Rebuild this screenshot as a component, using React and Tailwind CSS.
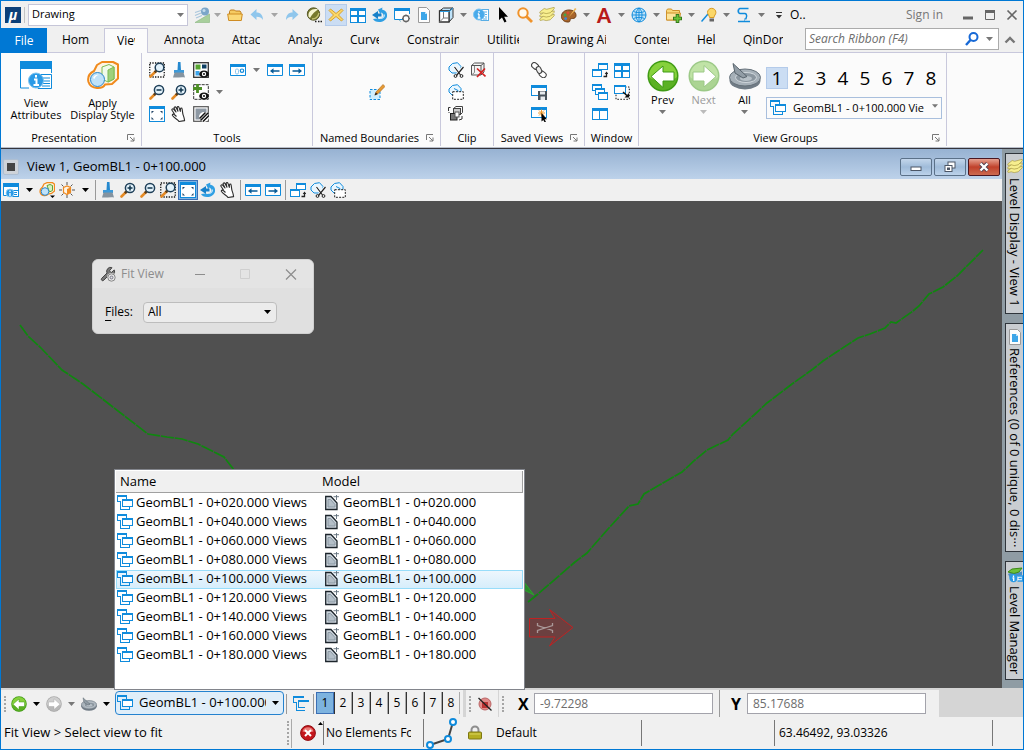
import React from "react";
import { Wrench } from "lucide-react";

const B = "#0f8bdc";

function Ico({ s = 16, vb = 16, crisp = false, children }) {
  return (
    <svg
      width={s}
      height={s}
      viewBox={`0 0 ${vb} ${vb}`}
      fill="none"
      className="shrink-0"
      aria-hidden="true"
      shapeRendering={crisp ? "crispEdges" : "auto"}
    >
      {children}
    </svg>
  );
}

function Win({ x, y, w, h, fill = "#fff" }) {
  return (
    <g>
      <rect x={x + 0.5} y={y + 0.5} width={w - 1} height={h - 1} fill={fill} stroke={B} />
      <rect x={x} y={y} width={w} height={Math.max(2, Math.round(h / 4))} fill={B} />
    </g>
  );
}

function Caret({ c = "#777", w = 7 }) {
  return (
    <svg width={w} height="4" viewBox="0 0 7 4" className="shrink-0" aria-hidden="true">
      <path d="M0 0h7L3.500 4z" fill={c} />
    </svg>
  );
}

function Glass({ cx = 10, cy = 6, r = 4.6, sign }) {
  return (
    <g>
      <path d={`M${cx - r + 1} ${cy + r - 1}L1.500 14.500`} stroke="#e58a25" strokeWidth="2.600" strokeLinecap="round" />
      <path d={`M${cx - r + 1} ${cy + r - 1}l-1.500 1.500`} stroke="#5a3b18" strokeWidth="2.600" />
      <circle cx={cx} cy={cy} r={r} fill="#e3f2fb" stroke="#1f3f58" strokeWidth="1.500" />
      {sign && <path d={`M${cx - 2.5} ${cy}h5`} stroke="#10344c" strokeWidth="1.500" />}
      {sign === "+" && <path d={`M${cx} ${cy - 2.5}v5`} stroke="#10344c" strokeWidth="1.500" />}
    </g>
  );
}

const hex = "M4.500 1.500L9.500.7 13 4.500v3L9 11H4L1 8V5z";

const I = {
  slope: (
    <Ico>
      <path d="M1 15.500L15.500 7v8.500z" fill="#a8cf9c" stroke="#8ab67f" strokeWidth=".6" />
      <path d="M1 5.500l6-2M1 8.500l6-2.500M2 11l6-2.500" stroke="#a9c6dc" strokeWidth="1.200" />
      <circle cx="11" cy="4.500" r="4" fill="#7ba6c9" />
      <circle cx="10" cy="3.500" r="1.500" fill="#c2dbee" />
    </Ico>
  ),
  folder: (
    <Ico>
      <path d="M2.500 13V4.500l1-1.500h4l1 1h4.500l1 1.500V13z" fill="#f5cb62" stroke="#bf7d1d" />
      <path d="M.7 7h14.600l-1 6.500H1.700z" fill="#fbd977" stroke="#cf8c23" />
    </Ico>
  ),
  undo: (
    <Ico>
      <path d="M1.500 7.500L7.500 2v3.500c4 0 6.500 2.500 6.500 7.500-1.500-2.500-3-3.300-6.500-3.300V13z" fill="#8fc6ec" />
    </Ico>
  ),
  redo: (
    <Ico>
      <path d="M14.500 7.500L8.500 2v3.500C4.500 5.500 2 8 2 13c1.500-2.500 3-3.300 6.500-3.300V13z" fill="#8fc6ec" />
    </Ico>
  ),
  sphere: (
    <Ico>
      <circle cx="7.500" cy="7" r="6.200" fill="#77792c" stroke="#595a2c" />
      <path d="M2.500 9.500C2 4 6.500 1 12 2.500 9.500 4 6 7 4 11z" fill="#f5f4d0" />
      <path d="M6 12c4 0 6-2 7-6" stroke="#c3c273" strokeWidth="1.300" />
      <path d="M9 14.500h1.500M12 14.500h1.500M14.500 14.500H16" stroke="#222" strokeWidth="1.400" />
    </Ico>
  ),
  cross: (
    <Ico>
      <path d="M2.500 2l5.500 4.500L13.500 2 15 3.500 10.500 8l4.500 4.500-1.500 1.500L8 9.500 2.500 14 1 12.500 5.500 8 1 3.500z" fill="#fbd768" stroke="#d9a22c" />
    </Ico>
  ),
  grid: (
    <Ico crisp>
      <rect x="0" y="1" width="16" height="15" fill={B} />
      <path d="M1 4h6v4H1zM9 4h6v4H9zM1 10h6v5H1zM9 10h6v5H9z" fill="#fff" />
    </Ico>
  ),
  rotate: (
    <Ico>
      <path d="M6 2.500l4.500-2-.5 2c4 1 5.500 3.500 5 7-.7 3.500-4 5.500-8 5.500C4 15 2 14 1 12l4-.5c3 1 6 .3 6.500-2.500.3-2-1-3-2.500-3.500l-.5 2z" fill="#2f9fe3" />
      <path d="M0 8l6-4v2.500h3.500V9.500H6V12z" fill="#1780c9" />
      <path d="M9 11.500c2-.5 3.500-2 3.500-4" stroke="#b9e2fa" strokeWidth="1.200" />
    </Ico>
  ),
  winGear: (
    <Ico>
      <path d="M9 12.500H.5V1.500h15V7" fill="#fff" stroke={B} />
      <path d="M0 1h16v3H0z" fill={B} />
      <circle cx="12" cy="11.500" r="3" fill="#fff" stroke="#666" strokeWidth="1.300" />
      <path d="M12 7.500v8M8 11.500h8" stroke="#666" strokeDasharray="1.200 5.600" />
      <path d="M5 13l2 1.500" stroke="#8bc" />
    </Ico>
  ),
  doc: (
    <Ico>
      <path d="M2.500.5h8l3 3v12h-11z" fill="#fdfdfd" stroke="#9a9a9a" />
      <path d="M5 5h4l2 2v6H5z" fill="#3da6e8" />
      <path d="M9 5l2 2H9z" fill="#bfe2f8" />
    </Ico>
  ),
  cube: (
    <Ico>
      <path d="M1.500 4l4-3H15l-4 3zM11 4l4-3v9.500L11 15z" fill="#bfe3fa" stroke="#333" strokeLinejoin="round" />
      <path d="M1.500 4H11v11H1.500z" fill="#fff" stroke="#333" strokeWidth="1.300" />
      <path d="M5.500 4v7M5.500 11H11M5.500 11l-4 4" stroke="#777" />
      <path d="M2 4.500h9L15 1" stroke="#2f9fe3" />
    </Ico>
  ),
  info: (
    <Ico>
      <rect x="8" y="2.500" width="7.500" height="11" fill="#fff" stroke="#5aaee5" />
      <path d="M11 5h3M12 7.500h2M12 10h2M10 12h4" stroke="#5aaee5" />
      <circle cx="6" cy="7.500" r="5.500" fill="#48aaea" stroke="#7cc4f1" />
      <path d="M6 4v1.500M6 7v4M4.800 7H6M4.700 11h2.700" stroke="#fff" strokeWidth="1.300" />
    </Ico>
  ),
  cursor: (
    <Ico>
      <path d="M4 0v13l3-2.500 2.500 5 2-1-2.300-4.800H13z" fill="#000" />
    </Ico>
  ),
  mag: (
    <Ico>
      <circle cx="6" cy="6" r="4.700" fill="#fffaf0" stroke="#f0932b" strokeWidth="2" />
      <path d="M9.500 9.500L15 15" stroke="#f0932b" strokeWidth="2.800" />
    </Ico>
  ),
  layers: (
    <Ico>
      {[12, 8.5, 5].map((y) => (
        <path key={y} d={`M.7 ${y}l4.500-3.500 2.500.8 7.500-2v1.500l-4 4-4 .8-3-.8-3 .7z`} fill="#f7ee8e" stroke="#aa9c45" strokeWidth=".7" />
      ))}
    </Ico>
  ),
  palette: (
    <Ico>
      <path d="M8 3C3 3 .5 6 .5 9.500S3.500 15 7 15c2 0 2-1 2-2s1-1.500 2.500-1.500c2 0 3.500-1 3.500-3C15 5 12 3 8 3z" fill="#a8652c" stroke="#6e3d14" />
      <circle cx="4" cy="8" r="1.400" fill="#47a34b" />
      <circle cx="7" cy="5.700" r="1.300" fill="#e04a34" />
      <circle cx="4.700" cy="11.600" r="1.400" fill="#3f86d9" />
      <path d="M8 10l6-9 1.500 1z" fill="#edb552" />
    </Ico>
  ),
  globe: (
    <Ico>
      <circle cx="8" cy="8" r="7" fill="#bfe3f9" stroke={B} />
      <path d="M1 8h14M8 1v14M2.500 4.500c3 1.500 8 1.500 11 0M2.500 11.500c3-1.500 8-1.500 11 0M8 1C4 4 4 12 8 15M8 1c4 3 4 11 0 14" stroke={B} strokeWidth=".9" />
    </Ico>
  ),
  folderPlus: (
    <Ico>
      <path d="M.5 13V3.500L1.500 2h4l1 1.500h7V13z" fill="#f9d778" stroke="#cf922c" />
      <path d="M.5 6h14l-1 7H.5z" fill="#fde59b" stroke="#cf922c" />
      <path d="M11.500 7v9M7 11.500h9" stroke="#33791b" strokeWidth="3.600" />
      <path d="M11.500 8v7M8 11.500h7" stroke="#6cc339" strokeWidth="1.800" />
    </Ico>
  ),
  bulb: (
    <Ico>
      <path d="M.5 14.500L7 7" stroke={B} strokeWidth="1.500" />
      <path d="M6.500 5.500a4.200 4.200 0 1 1 8.400 0c0 2-1.900 3-1.900 5H8.500c0-2-2-3-2-5z" fill="#fbd768" stroke="#d89b24" />
      <path d="M8.500 11.500H13v3H8.500z" fill="#666" />
    </Ico>
  ),
  sline: (
    <Ico>
      <path d="M11.500 1.500H4a2.500 2.500 0 0 0 0 5h4.500a2.500 2.500 0 0 1 0 5V14" stroke="#7db9e4" />
      <path d="M12.500 1.500H4c-2 0-2 5 0 5h5c2 0 2 4 .5 6M2 14.500h12" stroke={B} strokeWidth="1.300" />
    </Ico>
  ),
  customize: (
    <Ico>
      <path d="M5 5.500h6" stroke="#333" />
      <path d="M5 8h6l-3 3.500z" fill="#333" />
    </Ico>
  ),
  search: (
    <Ico>
      <circle cx="9.500" cy="6" r="4" stroke="#1769d6" strokeWidth="2" />
      <path d="M6.500 9L2 14" stroke="#1769d6" strokeWidth="2.400" />
    </Ico>
  ),
  viewAttr: (
    <Ico s={32} vb={32}>
      <path d="M9 27H.5V.5h31V12" fill="#fff" stroke={B} />
      <path d="M0 0h32v8H0z" fill={B} />
      <path d="M15 13.500h16.500v14H18z" fill="#fff" stroke={B} />
      <path d="M22 17h8M23 20h7M23 22.500h7M22 25h8" stroke={B} />
      <circle cx="16" cy="19.500" r="7.500" fill="#2a9ae6" stroke="#7cc4f1" />
      <path d="M16 14v2.500M14 18.500h2.500v5.500M13.500 24h5.500" stroke="#fff" strokeWidth="2" />
    </Ico>
  ),
  dispStyle: (
    <Ico s={32} vb={32}>
      <path d="M10 4L15 1h11l5 2.500v14l-6 5.500-7 .5C16 28 4 29 1.500 21 0 15 3 12 7 10z" fill="#fff3e2" stroke="#f08a1d" strokeWidth="2" strokeLinejoin="round" />
      <path d="M15 6l7-2.500 5 2.500v12l-6 3-6-3z" fill="#f0faeb" stroke="#7dbb52" />
      <path d="M21 9l6-3v12l-6 3z" fill="#9fd17c" stroke="#7dbb52" />
      <circle cx="10.500" cy="18.500" r="7" fill="#bfe2f9" stroke="#2b86c9" />
      <path d="M6 17c1-3 4-4 6-3-2 0-4 2-4.500 4z" fill="#fff" />
    </Ico>
  ),
  magBox: (
    <Ico>
      <rect x=".75" y="1" width="14.500" height="14" stroke="#111" strokeWidth="1.300" strokeDasharray="1.300 1.300" />
      <Glass cx={10.5} cy={5.5} r={4.3} />
    </Ico>
  ),
  brush: (
    <Ico>
      <path d="M7 0h2.500l.5 8H6.500z" fill="#2589cf" />
      <path d="M3 8h10v3H3z" fill="#3d9ad9" />
      <path d="M3.500 10.500h9l1.500 5c-3-1-8 .5-12 0z" fill="#8594a0" />
    </Ico>
  ),
  dispSet: (
    <Ico>
      <rect x=".7" y=".7" width="14.600" height="14.600" fill="#fff" stroke="#333" strokeWidth="1.300" />
      <path d="M2.500 2.500h5v5h-5z" fill="#57a531" />
      <path d="M9 2.500h4.500v4H9z" fill="#0d3f63" />
      <path d="M2.500 9h4v4.500h-4z" fill="#3ca4ea" />
      <ellipse cx="11" cy="12" rx="4.800" ry="3.600" fill="#111" />
      <circle cx="11" cy="12" r="2.200" fill="#fff" />
      <circle cx="11" cy="12" r="1" fill="#111" />
    </Ico>
  ),
  zoomOut: <Ico><Glass sign="-" /></Ico>,
  zoomIn: <Ico><Glass sign="+" /></Ico>,
  plusEye: (
    <Ico>
      <rect x=".7" y=".7" width="14.600" height="14.600" fill="#fff" stroke="#333" strokeDasharray="3 1" />
      <path d="M4.500 0v9M0 4.500h9" stroke="#4c8f25" strokeWidth="2.800" />
      <ellipse cx="11" cy="12" rx="4.800" ry="3.600" fill="#111" />
      <circle cx="11" cy="12" r="2.200" fill="#fff" />
      <circle cx="11" cy="12" r="1" fill="#111" />
    </Ico>
  ),
  fit: (
    <Ico>
      <rect x=".5" y=".5" width="15" height="15" fill="#fff" stroke={B} />
      <path d="M0 0h16v3H0z" fill={B} />
      <path d="M2.500 5H5L2.500 7.500zM13.500 5v2.500L11 5zM2.500 13.500V11L5 13.500zM13.500 13.500H11l2.500-2.500z" fill="#246" />
    </Ico>
  ),
  hand: (
    <Ico>
      <path
        d="M3.500 8L1 4.200c-.5-1.200 1-2 1.800-.9L5 6 3.200 2.200c-.4-1.200 1.200-1.800 1.800-.7L7 5.300 6.200 1.700C6 .5 7.600.2 8 1.400l1.300 4 .2-2.600c.2-1 1.500-1 1.600.1l.7 4.700c.3 2 1.500 3.400 1.800 7L8 15.500c-1-2-4.500-3-6.500-6-.5-1 .8-2 1.800-1l2.200 2"
        fill="#fff"
        stroke="#2b2b2b"
        strokeWidth="1.100"
        strokeLinejoin="round"
      />
    </Ico>
  ),
  shade: (
    <Ico>
      <rect x=".7" y=".7" width="14.600" height="14.600" fill="#fff" stroke="#555" strokeWidth="1.200" />
      <path d="M2.500 2.500h11v11h-11z" fill="#8e99a4" />
      <circle cx="11" cy="11" r="5" fill="#fff" />
      <path d="M6.500 12.500l6-6M7.500 14.500l7.500-7.500M10 15.500l6-6" stroke="#111" strokeWidth="1.500" />
    </Ico>
  ),
  zero: (
    <Ico>
      <path d="M.5 2.500h15v11H.5z" fill="#fff" stroke={B} />
      <path d="M0 2h16v3H0z" fill={B} />
      <rect x="5.500" y="7" width="3" height="5" rx="1.300" stroke="#8bc6ef" />
      <circle cx="12" cy="8.700" r="1.700" stroke={B} strokeWidth="1.200" />
    </Ico>
  ),
  back: (
    <Ico>
      <path d="M.5 2.500h15v11H.5z" fill="#fff" stroke={B} />
      <path d="M0 2h16v3H0z" fill={B} />
      <path d="M3 9l3.500-2.700v2h6v1.400h-6v2z" fill="#075a96" />
    </Ico>
  ),
  fwd: (
    <Ico>
      <path d="M.5 2.500h15v11H.5z" fill="#fff" stroke={B} />
      <path d="M0 2h16v3H0z" fill={B} />
      <path d="M13 9L9.500 6.300v2h-6v1.400h6v2z" fill="#075a96" />
    </Ico>
  ),
  pencilBox: (
    <Ico>
      <rect x="1" y="5.500" width="10" height="10" fill="#cdeeff" stroke={B} strokeDasharray="2.500 1.500" />
      <path d="M6 11l1-3 7-7.500 2 2L9 9.700z" fill="#e69a33" stroke="#a9651a" strokeWidth=".6" />
      <path d="M5.500 11.500l1.200-3 2 1.600z" fill="#222" />
    </Ico>
  ),
  clipCut: (
    <Ico>
      <path d={hex} fill="#e9f6fe" stroke={B} />
      <path d="M6.500 5l6 8.500M15 5l-6.500 8.500" stroke="#fff" strokeWidth="2.500" />
      <path d="M6.500 5l6 8M15.500 5l-7 8.500" stroke="#222" strokeWidth="1.200" />
      <circle cx="7.500" cy="14" r="1.400" stroke="#222" />
      <circle cx="13.500" cy="14" r="1.400" stroke="#222" />
    </Ico>
  ),
  clipX: (
    <Ico>
      <path d="M1.500 3.500l3-2.500H14v9l-3 3H1.500zM1.500 3.500H11V13M11 3.500L14 1" stroke="#555" fill="#f4f4f4" />
      <path d="M4.500 4v6.500M4.500 10.500l-3 2.500" stroke="#888" />
      <path d="M7 6.500l8.500 8M15 6.500l-8 8.500" stroke="#d32020" strokeWidth="1.700" />
    </Ico>
  ),
  clipMask: (
    <Ico>
      <path d={hex} fill="#e9f6fe" stroke={B} />
      <path d="M6 4.500l4 2V8" stroke={B} />
      <rect x="4.700" y="7.700" width="10.600" height="7.600" fill="#fff" stroke="#222" strokeDasharray="2 1.200" />
    </Ico>
  ),
  clipCubes: (
    <Ico>
      <rect x="5.500" y="2.500" width="7" height="6" fill="#ccc" stroke="#444" />
      <path d="M5.500 2.500L8 .5h6.500v6l-2 2" stroke="#444" />
      <rect x="2.500" y="7.500" width="6.500" height="6.500" fill="#777" stroke="#222" />
      <path d="M.5 5V1.500h2M1.500 6.500h-1M11 14l3-1v-3" stroke="#333" />
      <rect x="7" y="6" width="4" height="5" fill="#fff" stroke="#555" />
    </Ico>
  ),
  link: (
    <Ico>
      <rect x=".3" y="1.200" width="7.500" height="5.400" rx="2.700" transform="rotate(38 4 4)" fill="#fff" stroke="#444" strokeWidth="1.100" />
      <rect x="8.200" y="9.800" width="7.500" height="5.400" rx="2.700" transform="rotate(38 12 12)" fill="#fff" stroke="#444" strokeWidth="1.100" />
      <rect x="4.500" y="5.700" width="7" height="4.600" rx="2.300" transform="rotate(65 8 8)" fill="#eee" stroke="#444" strokeWidth="1.100" />
    </Ico>
  ),
  savedDisk: (
    <Ico>
      <Win x={0} y={1} w={16} h={11} />
      <rect x="7" y="7" width="9" height="9" fill="#46515a" />
      <path d="M9 7.500h5v3H9zM9.500 12.500h4.500V16H9.500z" fill="#e6eaee" />
    </Ico>
  ),
  savedCursor: (
    <Ico>
      <Win x={0} y={1} w={16} h={11} />
      <path d="M10.500 3.500v7M7 7h7M8 4.500l5 5M13 4.500l-5 5" stroke="#f09a2c" />
      <path d="M10.500 7v8.500l1.800-1.500 1.400 2.500 1.200-.7-1.300-2.500H16z" fill="#000" />
    </Ico>
  ),
  arrange: (
    <Ico>
      <Win x={6} y={1} w={10} h={7} />
      <Win x={0} y={7} w={10} h={8} />
      <path d="M11.500 14.500H14.500V11" stroke="#222" strokeWidth="1.300" />
      <path d="M12.700 12h3.600l-1.800-2.500z" fill="#222" />
    </Ico>
  ),
  cascade: (
    <Ico>
      <Win x={0} y={0} w={10} h={7} />
      <Win x={3} y={4} w={10} h={7} />
      <Win x={6} y={8} w={10} h={8} />
    </Ico>
  ),
  selectWin: (
    <Ico>
      <rect x="2" y="3" width="13.300" height="12.300" stroke="#111" strokeDasharray="1.500 1.500" />
      <Win x={0} y={1} w={12} h={9} />
      <path d="M9 8l5 4.500" stroke="#111" strokeWidth="1.500" />
      <path d="M10.500 13.500h4.500V9z" fill="#111" />
    </Ico>
  ),
  twoPane: (
    <Ico>
      <Win x={0} y={2} w={8} h={12} />
      <Win x={7} y={2} w={9} h={12} />
    </Ico>
  ),
  group: (
    <Ico crisp>
      <path d="M0 0h10v2H0zM0 2h1v5H0zM9 2h1v2H9zM1 6h2v1H1zM3 6h1v9H3zM4 14h8v1H4zM12 12h1v3h-1z" fill={B} />
      <rect x="5" y="4" width="11" height="8" fill={B} />
      <rect x="6" y="6" width="9" height="5" fill="#fff" />
    </Ico>
  ),
  groupOpen: (
    <Ico crisp>
      <path d="M0 0h11v2H0zM0 2h1v5H0zM1 6h2v1H1zM3 6h1v9H3zM4 14h8v1H4z" fill={B} />
      <path d="M5 4h11v2H5zM5 6h1v6H5zM6 11h6v1H6z" fill={B} />
    </Ico>
  ),
  model: (
    <Ico>
      <path d="M1.700 1.500H7L13 8v6.500H1.700z" fill="#ccd5dc" stroke="#1d252c" strokeWidth="1.300" />
      <path d="M4 4.500h2.500l4.500 5V12H4z" fill="#b4bfc8" stroke="#8b98a3" />
      <path d="M9.500 1.700H15M12.500 0v5" stroke="#5f6e7b" strokeWidth=".9" />
    </Ico>
  ),
  sun: (
    <Ico>
      <path d="M8 0v3M8 13v3M0 8h3M13 8h3M2.500 2.500l2 2M13.500 2.500l-2 2M2.500 13.500l2-2M13.500 13.500l-2-2" stroke="#555" />
      <path d="M4.500 5.500L8 4l3.500 1.500v5L8 12.500l-3.500-2z" fill="#fff4e3" stroke="#ef8b22" strokeWidth="1.200" />
      <path d="M8 7l3.500-1.500v5L8 12.500z" fill="#ef8b22" />
    </Ico>
  ),
  styleSmall: (
    <Ico>
      <path d="M5 2L8 .7h5.500l2 1.500V9l-3 2.500-3.500.5c-1 2-6.500 2.500-7.800-1.500C.7 8 1.500 6.500 3.500 5z" fill="#fff3e2" stroke="#f08a1d" strokeWidth="1.300" />
      <path d="M8 3.500L11 2.500l2.500 1v5l-3 1.500z" fill="#d5efc6" stroke="#5ea534" />
      <circle cx="6" cy="9.500" r="3.800" fill="#bfe2f9" stroke="#2b86c9" />
      <path d="M11 13.500h5L13.500 16z" fill="#000" />
    </Ico>
  ),
  attrSmall: (
    <Ico>
      <path d="M5 13.500H.5v-12h15V8" fill="#fff" stroke={B} />
      <path d="M0 1h16v4H0z" fill={B} />
      <rect x="8" y="8.500" width="7.500" height="6" fill="#fff" stroke={B} />
      <path d="M11 10.500h3M11 12.500h3" stroke={B} />
      <circle cx="7" cy="11" r="4" fill="#2a9ae6" stroke="#9ad3f6" strokeWidth=".8" />
      <path d="M7 8.500V10M7 11v3" stroke="#fff" strokeWidth="1.300" />
    </Ico>
  ),
};

function Round({ s, dir, tone }) {
  const fills = { green: ["#86d13c", "#3f9b14"], pale: ["#c0e3a6", "#9cc987"], gray: ["#cfcfcf", "#a9a9a9"] }[tone];
  return (
    <svg width={s} height={s} viewBox="0 0 32 32" className="shrink-0" aria-hidden="true">
      <circle cx="16" cy="16" r="15.500" fill={fills[1]} />
      <circle cx="16" cy="16" r="14" fill={fills[0]} />
      <path d="M2 17a14 14 0 0 0 28 0c-6 5-22 5-28 0z" fill={fills[1]} opacity=".6" />
      <path
        d="M4 16.500L16 6v6h11v9H16v6.500z"
        fill="#fff"
        stroke={fills[1]}
        transform={dir === "r" ? "rotate(180 16 16.500)" : undefined}
      />
    </svg>
  );
}

function Dish({ s = 32 }) {
  return (
    <svg width={s} height={s} viewBox="0 0 32 32" className="shrink-0" aria-hidden="true">
      <ellipse cx="16" cy="20.500" rx="15.500" ry="9" fill="#717c86" />
      <ellipse cx="16" cy="17.500" rx="15.500" ry="8.500" fill="#a6b0b8" stroke="#66717a" />
      <ellipse cx="17" cy="17.500" rx="10.500" ry="5" fill="#8b969f" stroke="#d0d7dc" />
      <ellipse cx="17" cy="18.500" rx="6" ry="2.500" fill="#b7c0c7" />
      <path d="M4 3.500l14 13-4 1.500-8-5z" fill="#919ca5" stroke="#59646d" />
    </svg>
  );
}

function Btn({ label, children, w = "w-[22px]", className = "" }) {
  return (
    <button type="button" aria-label={label} className={"flex h-[22px] shrink-0 items-center justify-center " + w + " " + className}>
      {children}
    </button>
  );
}

function Drop({ label, c, className = "w-[13px]" }) {
  return (
    <button type="button" aria-label={label} className={"flex h-5 shrink-0 items-center justify-center " + className}>
      <Caret c={c} />
    </button>
  );
}

const quick = [
  ["folder", "Open"],
  ["undo", "Undo", 1],
  ["redo", "Redo"],
  ["sphere", "Render"],
  ["cross", "Fence"],
  ["grid", "Tile"],
  ["rotate", "Rotate View"],
  ["winGear", "View Settings"],
  ["doc", "References"],
  ["cube", "Models", 1],
  ["info", "Properties"],
  ["cursor", "Element Selection"],
  ["mag", "Find"],
  ["layers", "Levels"],
  ["palette", "Color", 1],
  ["A", "Text", 1],
  ["globe", "Geographic", 1],
  ["folderPlus", "Attach", 1],
  ["bulb", "Tips", 1],
  ["sline", "Curves", 1],
  ["customize", "Customize"],
];

function TitleBar() {
  return (
    <header className="flex h-[27px] items-center bg-[#f0f0f0] pl-1">
      <div className="flex h-4 w-4 items-center justify-center bg-[#0b3f78]">
        <span className="text-[14px] leading-4 font-bold text-white italic">μ</span>
      </div>
      <span className="mx-[3px] h-4 w-px bg-[#c4c4c4]" />
      <div className="relative">
        <select aria-label="Workflow" className="block h-[22px] w-[160px] appearance-none border border-[#c6c6d8] bg-white px-[3px] text-[11px]">
          <option>Drawing</option>
        </select>
        <span className="pointer-events-none absolute top-[9px] right-1"><Caret /></span>
      </div>
      <Btn label="Terrain" w="w-[18px]" className="ml-[5px]">{I.slope}</Btn>
      <Drop label="Terrain options" c="#a5a5a5" />
      {quick.map(([k, l, d]) => (
        <React.Fragment key={k}>
          <Btn label={l} className={k === "cross" ? "border border-[#b4cbea] bg-[#cbddf3]" : ""}>
            {k === "A" ? <span className="font-[Lato] text-[20px] leading-none font-black text-[#b81a1a]">A</span> : I[k]}
          </Btn>
          {d ? <Drop label={l + " options"} c={k === "undo" ? "#a5a5a5" : "#777"} /> : null}
        </React.Fragment>
      ))}
      <span className="text-[12px]">O..</span>
      <span className="ml-auto text-[12px] text-[#777]">Sign in</span>
      <Btn label="Minimize" className="ml-[14px]">
        <Ico><path d="M3 9.500h10v3H3z" fill="#666" /></Ico>
      </Btn>
      <Btn label="Maximize">
        <Ico><path d="M3.500 4.500h9v8h-9z" stroke="#666" /><path d="M3 3h10v3H3z" fill="#666" /></Ico>
      </Btn>
      <Btn label="Close">
        <Ico><path d="M3.500 3.500l9 9M12.500 3.500l-9 9" stroke="#666" strokeWidth="1.700" /></Ico>
      </Btn>
    </header>
  );
}

const tabs = [
  ["Annotat", "w-[40px]"],
  ["Attac", "w-[28px]"],
  ["Analyz", "w-[34px]"],
  ["Curve", "w-[29px]"],
  ["Constrain", "w-[52px]"],
  ["Utilitie", "w-[32px]"],
  ["Drawing Ai", "w-[59px]"],
  ["Conten", "w-[35px]"],
  ["Hel", "w-[18px]"],
  ["QinDon", "w-[40px]"],
];

function Tabs() {
  return (
    <nav className="flex h-[25px] items-stretch bg-[#f0f0f0] text-[12px]">
      <button type="button" className="w-[46px] shrink-0 bg-[#0078d4] text-white">File</button>
      <div className="flex min-w-0 flex-1 border-b border-[#c8c8dc]">
        <button type="button" className="w-[57px] text-center">Hom</button>
        <button type="button" className="-mb-px w-[44px] border border-b-0 border-[#c8c8dc] bg-[#fbfbfb] px-3">
          <span className="block w-[18px] overflow-hidden whitespace-nowrap">View</span>
        </button>
        <span className="w-[2px]" />
        {tabs.map(([t, w]) => (
          <button key={t} type="button" className="shrink-0 px-[14px]">
            <span className={"block overflow-hidden text-left whitespace-nowrap " + w}>{t}</span>
          </button>
        ))}
        <div className="ml-auto flex h-[22px] w-[194px] shrink-0 items-center border border-[#ababab] bg-white">
          <input aria-label="Search Ribbon" placeholder="Search Ribbon (F4)" className="min-w-0 flex-1 px-[3px] text-[12px] italic outline-none placeholder:text-[#6d6d6d]" />
          {I.search}
          <Drop label="Search options" className="w-[18px]" />
        </div>
        <button type="button" aria-label="Collapse ribbon" className="flex w-[22px] items-center justify-center">
          <Ico><path d="M3.500 10.500L8 6l4.500 4.500" stroke="#777" strokeWidth="2.400" /></Ico>
        </button>
        <span className="w-[2px]" />
      </div>
    </nav>
  );
}

function Group({ title, launch, className, children, pad = "" }) {
  return (
    <section className={"flex shrink-0 flex-col border-r border-[#c9c9dc] " + className}>
      <div className={"flex flex-1 " + pad}>{children}</div>
      <div className="flex h-4 items-center">
        <span className="flex-1 text-center whitespace-nowrap">{title}</span>
        {launch && (
          <button type="button" aria-label={title + " settings"} className="mr-[6px]">
            <Ico s={8} vb={8}>
              <path d="M7 .5H.5V6M3 3l4 4M7 3.500V7H3.500" stroke="#777" />
            </Ico>
          </button>
        )}
      </div>
    </section>
  );
}

function Big({ icon, lines, arrow, dim, className }) {
  return (
    <button type="button" className={"flex flex-col items-center " + className}>
      <span className="flex h-8 items-center">{icon}</span>
      {lines.map((l) => (
        <span key={l} className={"leading-3 whitespace-nowrap " + (dim ? "text-[#9a9a9a]" : "")}>{l}</span>
      ))}
      {arrow && <span className="mt-1"><Caret c={dim ? "#bbb" : "#777"} /></span>}
    </button>
  );
}

function Grid({ cols, items, className = "" }) {
  return (
    <div className={"grid content-start " + cols + " " + className}>
      {items.map((it, i) => (it ? <Btn key={i} label={it[1]}>{it[0]}</Btn> : <span key={i} />))}
    </div>
  );
}

function Ribbon() {
  return (
    <div className="flex h-[95px] border-b border-[#b9bfca] bg-[#fbfbfb] pb-px text-[11px]">
      <Group title="Presentation" launch className="w-[141px]" pad="pt-2 px-[3px] gap-[1px]">
        <Big className="w-[64px] [&>span:first-child]:mb-1" icon={I.viewAttr} lines={["View", "Attributes"]} />
        <Big className="w-[67px] [&>span:first-child]:mb-1" icon={I.dispStyle} lines={["Apply", "Display Style"]} />
      </Group>
      <Group title="Tools" className="w-[171px]" pad="pt-[6px] pl-1">
        <Grid
          cols="grid-cols-[22px_22px_22px]"
          items={[
            [I.magBox, "Window Area"], [I.brush, "Update View"], [I.dispSet, "Display Set"],
            [I.zoomOut, "Zoom Out"], [I.zoomIn, "Zoom In"], [I.plusEye, "Add to Display Set"],
            [I.fit, "Fit View"], [I.hand, "Pan View"], [I.shade, "Shading"],
          ]}
        />
        <div className="flex w-[14px] flex-col pt-[23px]"><Drop label="Display set options" className="w-[14px]" /></div>
        <div className="flex h-[22px] items-center pl-px">
          <Btn label="View Rotation">{I.zero}</Btn>
          <Drop label="Rotation options" className="w-[15px]" />
          <Btn label="View Previous">{I.back}</Btn>
          <Btn label="View Next">{I.fwd}</Btn>
        </div>
      </Group>
      <Group title="Named Boundaries" launch className="w-[128px]" pad="justify-center pt-[28px]">
        <Btn label="Place Named Boundary">{I.pencilBox}</Btn>
      </Group>
      <Group title="Clip" className="w-[53px]" pad="pt-[6px] pl-1">
        <Grid
          cols="grid-cols-[22px_22px]"
          items={[[I.clipCut, "Clip Volume"], [I.clipX, "Delete Clip"], [I.clipMask, "Clip Mask"], null, [I.clipCubes, "Swap Clip"], null]}
        />
      </Group>
      <Group title="Saved Views" launch className="w-[91px]" pad="justify-center pt-[6px]">
        <Grid cols="grid-cols-[22px]" items={[[I.link, "Link Saved View"], [I.savedDisk, "Save View"], [I.savedCursor, "Apply Saved View"]]} />
      </Group>
      <Group title="Window" className="w-[54px]" pad="pt-[6px] pl-1">
        <Grid
          cols="grid-cols-[22px_22px]"
          items={[[I.arrange, "Arrange"], [I.grid, "Tile"], [I.cascade, "Cascade"], [I.selectWin, "Select Window"], [I.twoPane, "Split"], null]}
        />
      </Group>
      <Group title="View Groups" launch className="w-[308px]" pad="pt-[7px] pl-[3px]">
        <Big className="w-[41px] [&>span:nth-child(2)]:mt-[2px]" icon={<Round s={32} dir="l" tone="green" />} lines={["Prev"]} arrow />
        <Big className="w-[41px] [&>span:nth-child(2)]:mt-[2px]" icon={<Round s={32} dir="r" tone="pale" />} lines={["Next"]} arrow dim />
        <Big className="w-[41px] [&>span:nth-child(2)]:mt-[2px]" icon={<Dish />} lines={["All"]} arrow />
        <div className="flex flex-col gap-2 pt-[7px] pl-px">
          <div className="flex">
            {[1, 2, 3, 4, 5, 6, 7, 8].map((n) => (
              <button
                key={n}
                type="button"
                className={"h-[22px] w-[22px] text-center text-[19px] leading-5 " + (n === 1 ? "border border-[#b4cbea] bg-[#cbddf3]" : "")}
              >
                {n}
              </button>
            ))}
          </div>
          <div className="relative w-[176px]">
            <span className="pointer-events-none absolute top-[3px] left-1">{I.group}</span>
            <select aria-label="View group" className="block h-[22px] w-full appearance-none border border-[#a9bfdd] bg-[#fbfbfb] pr-[13px] pl-[26px] text-[11px]">
              <option>GeomBL1 - 0+100.000 Vie</option>
            </select>
            <span className="pointer-events-none absolute top-[7px] right-1"><Caret w={6} /></span>
          </div>
        </div>
      </Group>
    </div>
  );
}

const Sep = () => <span className="mx-[2px] h-5 w-px shrink-0 bg-[#999]" />;

function Tool({ icon, label, on }) {
  return (
    <button
      type="button"
      aria-label={label}
      className={"flex h-5 w-5 shrink-0 items-center justify-center " + (on ? "border border-[#3c6fb5] bg-[#7fb4e2]" : "")}
    >
      {icon}
    </button>
  );
}

function ViewToolbar() {
  return (
    <div className="flex h-[22px] items-center bg-[#f0f0f0]">
      <Tool icon={I.attrSmall} label="View attributes" />
      <Drop label="View attribute options" c="#000" className="w-4" />
      <Tool icon={I.styleSmall} label="Display style" />
      <Tool icon={I.sun} label="Brightness" />
      <Drop label="Brightness options" c="#000" className="w-4" />
      <Sep />
      <Tool icon={I.brush} label="Update view" />
      <Tool icon={I.zoomIn} label="Zoom in" />
      <Tool icon={I.zoomOut} label="Zoom out" />
      <Tool icon={I.magBox} label="Window area" />
      <Tool icon={I.fit} label="Fit view" on />
      <Tool icon={I.rotate} label="Rotate view" />
      <Tool icon={I.hand} label="Pan view" />
      <Sep />
      <Tool icon={I.back} label="View previous" />
      <Tool icon={I.fwd} label="View next" />
      <Sep />
      <Tool icon={I.arrange} label="Copy view" />
      <Tool icon={I.clipCut} label="Clip volume" />
      <Tool icon={I.clipMask} label="Clip mask" />
    </div>
  );
}

function Drawing() {
  return (
    <svg className="absolute inset-0 h-full w-full" aria-hidden="true">
      <g transform="translate(-1 -201)" fill="none">
        <g stroke="#0f870f" strokeWidth="1.700" strokeDasharray="13 1">
          <path d="M20 325L28 336 40 347 62 370 83 384 148 434 167 437 182 439 198 444 224 457 234 470" />
          <path d="M528 602L538 594 575 562 587 553 608 529 629 506 638 504 644 494 682 472 695 460 707 450 728 440 733 434 753 416 767 403 792 384 813 369 823 361 835 353 858 338 870 334 885 328 891 322 896 323 913 311 919 306 929 294 943 287 957 276 983 250" />
        </g>
        <path d="M524 582L534 595 524 590z" fill="#2a8a2a" stroke="#2ba52b" />
        <path d="M529.500 618.500H555L549.500 609.500 573 627.500 549.500 646 555 637H529.500z" fill="#6c4040" stroke="#bf2222" />
        <path d="M537.500 623v2.500l15 5v2.500M552.500 623v2.500l-15 5v2.500" stroke="#a99" strokeWidth="1.300" />
      </g>
    </svg>
  );
}

function FitView() {
  return (
    <div role="dialog" aria-label="Fit View" className="absolute top-[58px] left-[91px] w-[222px] overflow-hidden rounded-md border border-[#d0d0d0] bg-[#e0e0e0] text-[12px]">
      <div className="flex h-7 items-center bg-[#e4e4e4] pl-[7px] text-[#8d8d8d]">
        <span className="relative flex">
          <Wrench size={16} fill="#777" color="#444" strokeWidth={1.5} aria-hidden="true" />
          <span className="absolute right-0 bottom-0 flex rounded-full bg-[#e4e4e4]">
            <Ico s={9} vb={9}>
              <circle cx="4.500" cy="4.500" r="3.700" stroke="#888" />
              <circle cx="4.500" cy="4.500" r="1.400" stroke="#778" />
            </Ico>
          </span>
        </span>
        <span className="ml-[5px] flex-1">Fit View</span>
        <Ico><path d="M3 8.500h10" stroke="#8d8d8d" /></Ico>
        <span className="ml-[29px]"><Ico><path d="M3.500 3.500h9v9h-9z" stroke="#cfcfcf" /></Ico></span>
        <button type="button" aria-label="Close dialog" className="mr-[14px] ml-[30px]">
          <Ico><path d="M3 3.500l10 10M13 3.500l-10 10" stroke="#8d8d8d" strokeWidth="1.200" /></Ico>
        </button>
      </div>
      <div className="flex h-[45px] items-center pt-[3px] pl-3">
        <label htmlFor="fit-files" className="w-[38px]">
          <span className="underline underline-offset-4">F</span>iles:
        </label>
        <div className="relative">
          <select id="fit-files" className="block h-[21px] w-[134px] appearance-none rounded-sm border border-[#bdbdbd] bg-[#ececec] px-1 text-[12px]">
            <option>All</option>
          </select>
          <span className="pointer-events-none absolute top-2 right-[6px]"><Caret c="#000" /></span>
        </div>
      </div>
    </div>
  );
}

function ViewWindow() {
  return (
    <main className="flex min-w-0 flex-1 flex-col">
      <div className="flex h-[30px] items-center bg-linear-to-b from-[#97b2d2] to-[#bdd2ea] pt-[6px] pl-[2px]">
        <Ico>
          <rect x=".5" y=".5" width="15" height="15" rx="1.500" fill="#ced3d9" stroke="#aebfd2" />
          <rect x="4" y="4" width="8" height="8" fill="#444" />
        </Ico>
        <h1 className="ml-2 flex-1 text-[13px]">View 1, GeomBL1 - 0+100.000</h1>
        <div className="mr-[2px] flex gap-[2px]">
          {["Minimize view", "Restore view", "Close view"].map((l, i) => (
            <button
              key={l}
              type="button"
              aria-label={l}
              className={
                "flex h-[18px] w-8 items-center justify-center rounded-xs border " +
                (i === 2
                  ? "border-[#4a1620] bg-linear-to-b from-[#e5a090] via-[#c0402a] to-[#cc6a50]"
                  : "border-[#5b7189] bg-linear-to-b from-[#c3d6eb] via-[#9fbbd9] to-[#bcd2ea]")
              }
            >
              {i === 0 && <Ico s={14} vb={14}><rect x="2" y="7" width="10" height="3.500" fill="#fff" stroke="#4c5666" /></Ico>}
              {i === 1 && (
                <Ico s={14} vb={14}>
                  <rect x="5" y="2" width="7" height="6" fill="#fff" stroke="#4c5666" />
                  <rect x="2" y="5.500" width="7" height="6" fill="#fff" stroke="#4c5666" />
                  <rect x="4.500" y="8" width="2" height="1.500" stroke="#4c5666" />
                </Ico>
              )}
              {i === 2 && (
                <Ico s={14} vb={14}>
                  <path d="M3.500 3.500l7 7M10.500 3.500l-7 7" stroke="#4c4050" strokeWidth="4" />
                  <path d="M3.500 3.500l7 7M10.500 3.500l-7 7" stroke="#fff" strokeWidth="2.400" />
                </Ico>
              )}
            </button>
          ))}
        </div>
      </div>
      <ViewToolbar />
      <div className="relative min-h-[400px] flex-1 bg-[#505050]">
        <Drawing />
        <FitView />
      </div>
    </main>
  );
}

function SideTab({ icon, text, className }) {
  return (
    <button type="button" className={"flex w-[18px] flex-col items-center gap-[3px] border border-r-0 border-[#2f353b] bg-[#c9cdd1] pt-[5px] " + className}>
      {icon}
      <span className="text-[13px] leading-4 whitespace-nowrap [writing-mode:vertical-rl]">{text}</span>
    </button>
  );
}

function Side() {
  return (
    <aside className="flex w-[21px] shrink-0 flex-col items-end gap-[9px] bg-[#8f9ca4] pt-1">
      <SideTab icon={I.layers} text="Level Display - View 1" className="h-[161px]" />
      <SideTab icon={I.doc} text="References (0 of 0 unique, 0 dis···" className="h-[229px]" />
      <SideTab
        icon={
          <Ico>
            <path d="M1 7l4-2 4 1 6-1.500V8l-6 3H3z" fill="#4d8ec4" />
            <path d="M1 5l4-3 10-1-3 4-5 1.500z" fill="#6cc03a" stroke="#3c8a17" />
            <circle cx="6.500" cy="11" r="4.200" fill="#2a9ae6" />
            <path d="M6.500 8.500V10M5.500 11h1.200v3" stroke="#fff" strokeWidth="1.300" />
            <path d="M10.500 9h5v5h-5M11.500 11.500h3" stroke="#2a9ae6" strokeWidth="1.300" fill="#fff" />
          </Ico>
        }
        text="Level Manager"
        className="h-[119px]"
      />
    </aside>
  );
}

const stations = ["020", "040", "060", "080", "100", "120", "140", "160", "180"];

function GroupList() {
  return (
    <div className="absolute bottom-full -left-px z-10 mb-px h-[221px] w-[411px] border border-[#82858c] bg-white p-px">
      <table className="w-full table-fixed border-collapse text-left text-[13px] whitespace-nowrap">
        <thead>
          <tr className="h-[22px] border-r border-b border-[#a0a0a0] bg-[#f0f0f0]">
            <th className="w-[202px] p-0 pl-1 font-normal">Name</th>
            <th className="p-0 pl-1 font-normal">Model</th>
          </tr>
        </thead>
        <tbody>
          <tr className="h-px"><td /><td /></tr>
          {stations.map((s) => (
            <tr key={s} className={"h-[19px] " + (s === "100" ? "bg-linear-to-b from-[#eff7fd] to-[#d5edfb] outline outline-[#98ddfa] -outline-offset-1" : "")}>
              <td className="p-0">
                <span className="flex h-[19px] items-center gap-[3px] pl-px">{I.group}GeomBL1 - 0+{s}.000 Views</span>
              </td>
              <td className="p-0">
                <span className="flex h-[19px] items-center gap-[3px] pl-[6px]">{I.model}GeomBL1 - 0+{s}.000</span>
              </td>
            </tr>
          ))}
        </tbody>
      </table>
    </div>
  );
}

const Grip = () => <span className="mx-[3px] h-4 shrink-0 border-l-2 border-dotted border-[#a5a5a5]" />;

function ViewBar() {
  return (
    <div className="flex h-[29px] items-stretch bg-[#d5d5d5] pt-[2px] text-[12px]">
      <div className="flex items-center bg-[#f0f0f0]">
        <Grip />
        <Btn label="Previous group" w="w-5">{<Round s={16} dir="l" tone="green" />}</Btn>
        <Drop label="Previous list" c="#000" className="w-[14px]" />
        <Btn label="Next group"><Round s={16} dir="r" tone="gray" /></Btn>
        <Drop label="Next list" c="#777" />
        <Btn label="All groups"><Dish s={16} /></Btn>
        <Drop label="All groups list" c="#000" />
        <div className="relative mb-[2px] ml-[2px]">
          <GroupList />
          <span className="pointer-events-none absolute top-1 left-[2px]">{I.group}</span>
          <select aria-label="Active view group" className="block h-6 w-[169px] appearance-none rounded-sm border border-[#2482cf] bg-[#e0eef9] pr-[17px] pl-[23px] text-[13px]">
            <option>GeomBL1 - 0+100.000 Views</option>
          </select>
          <span className="pointer-events-none absolute top-[10px] right-[5px]"><Caret c="#000" /></span>
        </div>
        <span className="mx-[2px] h-5 w-px bg-[#999]" />
        <Btn label="Manage View Groups" w="w-6">{I.groupOpen}</Btn>
        <span className="mr-[2px] h-5 w-px bg-[#999]" />
        {[1, 2, 3, 4, 5, 6, 7, 8].map((n) => (
          <button
            key={n}
            type="button"
            className={"mb-[2px] h-[22px] w-[18px] " + (n === 1 ? "border border-[#3c6fb5] bg-[#7db3df]" : "border-r border-l border-r-[#aaa] border-l-[#333]")}
          >
            {n}
          </button>
        ))}
        <span className="w-[3px]" />
      </div>
      <div className="ml-[3px] flex items-center bg-[#f0f0f0] pr-[2px]">
        <Grip />
        <Btn label="Isolate">
          <Ico>
            <circle cx="8" cy="8" r="6" fill="#e08a88" stroke="#b66" />
            <path d="M5 6h6v6H5z" fill="#b33" />
            <path d="M1.500 2l13 12.500" stroke="#222" strokeWidth="1.300" />
          </Ico>
        </Btn>
      </div>
      <div className="ml-px flex items-center bg-[#f0f0f0] pr-[13px]">
        <Grip />
        <label htmlFor="coord-x" className="ml-[11px] w-[16px] text-[16px] font-bold">X</label>
        <input id="coord-x" defaultValue="-9.72298" className="h-[21px] w-[179px] border border-[#a3a3ab] bg-white px-[5px] text-[#6d6d6d]" />
        <span className="ml-[6px] h-full w-px bg-[#999]" />
        <label htmlFor="coord-y" className="ml-[11px] w-[16px] text-[16px] font-bold">Y</label>
        <input id="coord-y" defaultValue="85.17688" className="h-[21px] w-[179px] border border-[#a3a3ab] bg-white px-[5px] text-[#6d6d6d]" />
      </div>
    </div>
  );
}

function StatusBar() {
  return (
    <footer className="flex h-8 items-center bg-[#f0f0f0] pl-[3px] text-[12px] whitespace-nowrap">
      <span className="w-[279px] text-[13px]">Fit View &gt; Select view to fit</span>
      <span className="mr-[2px] ml-1 h-6 border-l-2 border-dotted border-[#a5a5a5]" />
      <span className="h-[29px] w-px bg-[#aaa]" />
      <button type="button" aria-label="Cancel" className="ml-2">
        <Ico>
          <circle cx="8" cy="8" r="7.400" fill="#c4161c" stroke="#8f0e12" />
          <path d="M2.500 6.500a5.700 5.700 0 0 1 11 0c-3 1-8 1-11 0z" fill="#ea7b78" />
          <path d="M5 5l6 6M11 5l-6 6" stroke="#fff" strokeWidth="2" />
        </Ico>
      </button>
      <span className="mb-5 ml-[2px]"><svg width="5" height="3" viewBox="0 0 5 3" aria-hidden="true"><path d="M0 3h5L2.500 0z" /></svg></span>
      <span className="mr-[2px] h-6 w-px bg-[#777]" />
      <span className="w-[85px] overflow-hidden">No Elements Found</span>
      <span className="ml-[12px] h-7 w-px bg-[#777]" />
      <span className="ml-[2px]">
        <Ico s={32} vb={32}>
          <path d="M4 28l18-6 5-17" stroke="#444" strokeWidth="2" />
          <circle cx="4" cy="28" r="3" fill="#fff" stroke={B} strokeWidth="2" />
          <circle cx="22" cy="22" r="3" fill="#fff" stroke={B} strokeWidth="2" />
          <circle cx="27" cy="5" r="3" fill="#fff" stroke={B} strokeWidth="2" />
        </Ico>
      </span>
      <span className="ml-[9px]">
        <Ico>
          <path d="M4.500 8V5a3.500 3.500 0 0 1 7 0v3" stroke="#8d8d8d" strokeWidth="2" />
          <rect x="1.500" y="7" width="13" height="7" rx="1" fill="#b5ae22" stroke="#7d7712" />
          <path d="M2.500 9h11" stroke="#dcd65c" />
        </Ico>
      </span>
      <span className="ml-[13px] w-[145px]">Default</span>
      <span className="h-[26px] w-px bg-[#777]" />
      <span className="ml-auto h-[26px] w-px bg-[#777]" />
      <span className="ml-1 w-[213px]">63.46492, 93.03326</span>
      <span className="mr-[30px] h-[26px] w-px bg-[#777]" />
    </footer>
  );
}

export default function App() {
  return (
    <div className="flex min-h-screen flex-col overflow-x-hidden border border-[#0078d4] bg-[#f0f0f0] font-['Open_Sans','Noto_Sans',sans-serif] text-black [&_button]:cursor-default">
      <TitleBar />
      <Tabs />
      <Ribbon />
      <div className="flex min-h-0 flex-1 border-t border-[#34343c]">
        <ViewWindow />
        <Side />
      </div>
      <ViewBar />
      <StatusBar />
    </div>
  );
}
